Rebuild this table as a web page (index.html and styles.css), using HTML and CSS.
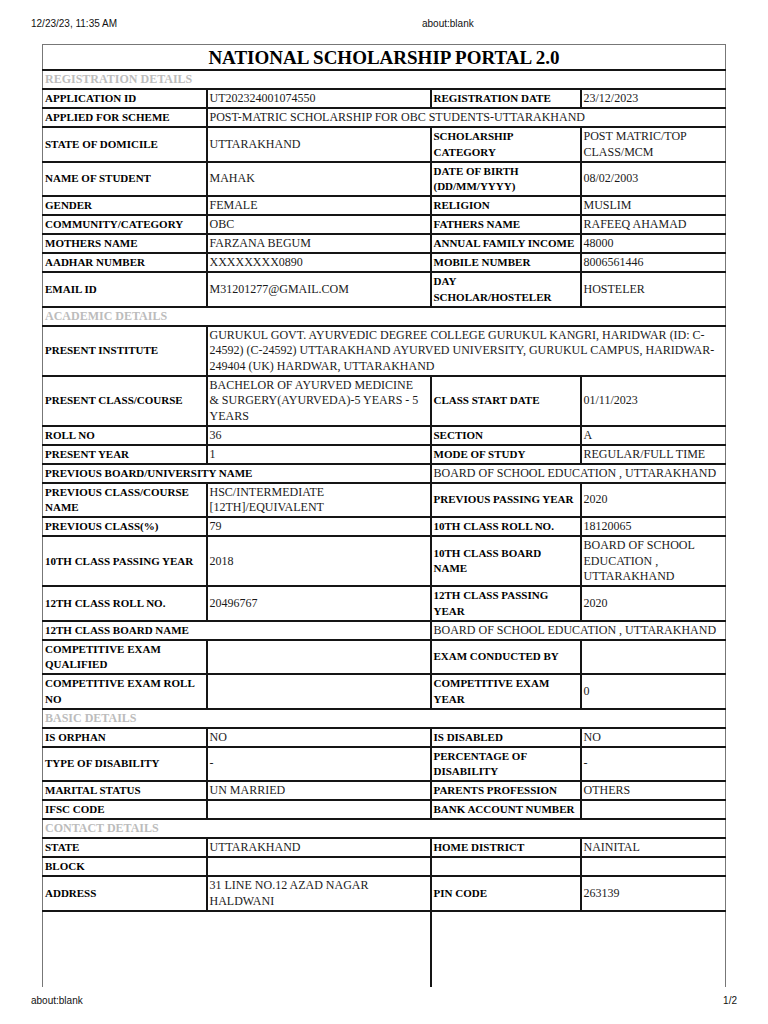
FILE: index.html
```html
<!DOCTYPE html>
<html lang="en">
<head>
<meta charset="utf-8">
<title>about:blank</title>
<link rel="stylesheet" href="styles.css">
</head>
<body>
<header class="print-head">
  <span class="print-date">12/23/23, 11:35 AM</span>
  <span class="print-title">about:blank</span>
</header>

<table class="sheet">
  <colgroup>
    <col class="c1"><col class="c2"><col class="c3"><col class="c4">
  </colgroup>
  <tbody>
    <tr class="title-row"><th colspan="4">NATIONAL SCHOLARSHIP PORTAL 2.0</th></tr>
    <tr class="section"><td colspan="4">REGISTRATION DETAILS</td></tr>
    <tr><th>APPLICATION ID</th><td>UT202324001074550</td><th>REGISTRATION DATE</th><td>23/12/2023</td></tr>
    <tr><th>APPLIED FOR SCHEME</th><td colspan="3">POST-MATRIC SCHOLARSHIP FOR OBC STUDENTS-UTTARAKHAND</td></tr>
    <tr><th>STATE OF DOMICILE</th><td>UTTARAKHAND</td><th>SCHOLARSHIP CATEGORY</th><td>POST MATRIC/TOP CLASS/MCM</td></tr>
    <tr><th>NAME OF STUDENT</th><td>MAHAK</td><th>DATE OF BIRTH (DD/MM/YYYY)</th><td>08/02/2003</td></tr>
    <tr><th>GENDER</th><td>FEMALE</td><th>RELIGION</th><td>MUSLIM</td></tr>
    <tr><th>COMMUNITY/CATEGORY</th><td>OBC</td><th>FATHERS NAME</th><td>RAFEEQ AHAMAD</td></tr>
    <tr><th>MOTHERS NAME</th><td>FARZANA BEGUM</td><th>ANNUAL FAMILY INCOME</th><td>48000</td></tr>
    <tr><th>AADHAR NUMBER</th><td>XXXXXXXX0890</td><th>MOBILE NUMBER</th><td>8006561446</td></tr>
    <tr><th>EMAIL ID</th><td>M31201277@GMAIL.COM</td><th>DAY<br>SCHOLAR/HOSTELER</th><td>HOSTELER</td></tr>

    <tr class="section"><td colspan="4">ACADEMIC DETAILS</td></tr>
    <tr><th>PRESENT INSTITUTE</th><td colspan="3">GURUKUL GOVT. AYURVEDIC DEGREE COLLEGE GURUKUL KANGRI, HARIDWAR (ID: C-24592) (C-24592) UTTARAKHAND AYURVED UNIVERSITY, GURUKUL CAMPUS, HARIDWAR-249404 (UK) HARDWAR, UTTARAKHAND</td></tr>
    <tr><th>PRESENT CLASS/COURSE</th><td>BACHELOR OF AYURVED MEDICINE<br>&amp; SURGERY(AYURVEDA)-5 YEARS - 5 YEARS</td><th>CLASS START DATE</th><td>01/11/2023</td></tr>
    <tr><th>ROLL NO</th><td>36</td><th>SECTION</th><td>A</td></tr>
    <tr><th>PRESENT YEAR</th><td>1</td><th>MODE OF STUDY</th><td>REGULAR/FULL TIME</td></tr>
    <tr><th colspan="2">PREVIOUS BOARD/UNIVERSITY NAME</th><td colspan="2">BOARD OF SCHOOL EDUCATION , UTTARAKHAND</td></tr>
    <tr><th>PREVIOUS CLASS/COURSE NAME</th><td>HSC/INTERMEDIATE [12TH]/EQUIVALENT</td><th>PREVIOUS PASSING YEAR</th><td>2020</td></tr>
    <tr><th>PREVIOUS CLASS(%)</th><td>79</td><th>10TH CLASS ROLL NO.</th><td>18120065</td></tr>
    <tr><th>10TH CLASS PASSING YEAR</th><td>2018</td><th>10TH CLASS BOARD<br>NAME</th><td>BOARD OF SCHOOL EDUCATION , UTTARAKHAND</td></tr>
    <tr><th>12TH CLASS ROLL NO.</th><td>20496767</td><th>12TH CLASS PASSING YEAR</th><td>2020</td></tr>
    <tr><th colspan="2">12TH CLASS BOARD NAME</th><td colspan="2">BOARD OF SCHOOL EDUCATION , UTTARAKHAND</td></tr>
    <tr><th>COMPETITIVE EXAM QUALIFIED</th><td></td><th>EXAM CONDUCTED BY</th><td></td></tr>
    <tr><th>COMPETITIVE EXAM ROLL NO</th><td></td><th>COMPETITIVE EXAM YEAR</th><td>0</td></tr>

    <tr class="section"><td colspan="4">BASIC DETAILS</td></tr>
    <tr><th>IS ORPHAN</th><td>NO</td><th>IS DISABLED</th><td>NO</td></tr>
    <tr><th>TYPE OF DISABILITY</th><td>-</td><th>PERCENTAGE OF DISABILITY</th><td>-</td></tr>
    <tr><th>MARITAL STATUS</th><td>UN MARRIED</td><th>PARENTS PROFESSION</th><td>OTHERS</td></tr>
    <tr><th>IFSC CODE</th><td></td><th>BANK ACCOUNT NUMBER</th><td></td></tr>

    <tr class="section"><td colspan="4">CONTACT DETAILS</td></tr>
    <tr><th>STATE</th><td>UTTARAKHAND</td><th>HOME DISTRICT</th><td>NAINITAL</td></tr>
    <tr><th>BLOCK</th><td></td><th></th><td></td></tr>
    <tr><th>ADDRESS</th><td>31 LINE NO.12 AZAD NAGAR HALDWANI</td><th>PIN CODE</th><td>263139</td></tr>
    <tr class="page-cut"><td colspan="2"></td><td colspan="2"></td></tr>
  </tbody>
</table>

<footer class="print-foot">
  <span>about:blank</span>
  <span>1/2</span>
</footer>
</body>
</html>
```

FILE: styles.css
```css
html, body {
  margin: 0;
  padding: 0;
  background: #ffffff;
}

body {
  width: 768px;
  height: 1024px;
  position: relative;
  font-family: "Liberation Serif", "Times New Roman", serif;
  color: #111;
}

.print-head {
  display: grid;
  grid-template-columns: 391px 1fr;
  padding: 18px 30px 0 31px;
  height: 26px;
  box-sizing: border-box;
  font-family: "Liberation Sans", Arial, sans-serif;
  font-size: 10px;
  line-height: 12px;
  color: #111;
}

.sheet {
  margin: 18px 0 0 42px;
  width: 683px;
  table-layout: fixed;
  border-collapse: collapse;
  border: 1px solid #777;
  border-bottom: none;
}

.c1 { width: 164px; }
.c2 { width: 224px; }
.c3 { width: 150px; }
.c4 { width: 145px; }

.sheet th,
.sheet td {
  border: 2px solid #151515;
  padding: 1px 2px 0.5px 2px;
  line-height: 15.5px;
  vertical-align: middle;
  text-align: left;
}

.sheet tr > :first-child {
  border-left: 1px solid #777;
}

.sheet tr > :last-child {
  border-right: 1px solid #777;
}

.sheet th {
  font-size: 11px;
  font-weight: bold;
  color: #000;
}

.sheet td {
  font-size: 12px;
  font-weight: normal;
  color: #1a1a1a;
}

.title-row th {
  text-align: center;
  font-size: 19px;
  line-height: 21px;
  padding: 2px 0 1px;
  border-top: 1px solid #777;
  color: #000;
}

.section td {
  font-size: 12px;
  font-weight: bold;
  color: #bcbcbc;
}

.page-cut td {
  height: 74px;
  border-bottom: none;
}

.print-foot {
  position: absolute;
  left: 31px;
  right: 31px;
  top: 995px;
  display: flex;
  justify-content: space-between;
  font-family: "Liberation Sans", Arial, sans-serif;
  font-size: 10px;
  line-height: 12px;
  color: #111;
}
```
